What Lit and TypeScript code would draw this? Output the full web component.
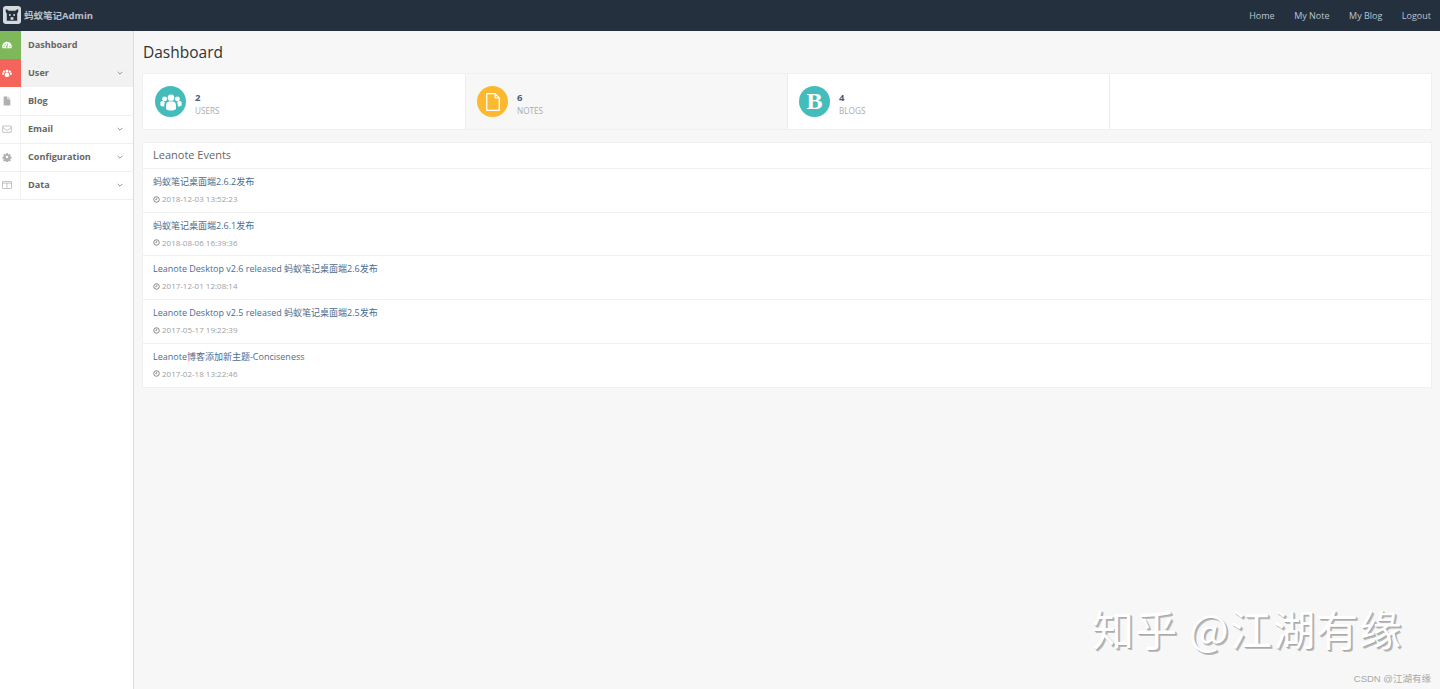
import { LitElement, html, css, svg } from "lit";
import { customElement } from "lit/decorators.js";

const usersIcon = svg`<g fill="currentColor"><circle cx="12" cy="7.400" r="3.600"/><circle cx="5" cy="8.600" r="2.700"/><circle cx="19" cy="8.600" r="2.700"/><path d="M6.600 20v-4.600c0-2.400 1.800-3.900 3.400-3.900h4c1.600 0 3.400 1.500 3.400 3.900V20c-1.600 1-3.400 1.300-5.400 1.300S8.200 21 6.600 20z"/><path d="M5.400 12.200c-.6.900-.8 2-.8 3.300v1.500C2.600 16.900 1 16.300.4 15.800v-2.600c0-1.200 1-2.200 2.200-2.200h1c.6.600 1.200 1 1.800 1.200zM18.600 12.200c.6.900.8 2 .8 3.300v1.500c2-.1 3.600-.7 4.200-1.200v-2.600c0-1.200-1-2.200-2.200-2.200h-1c-.6.600-1.200 1-1.800 1.200z"/></g>`;

const gauge = svg`<path fill="currentColor" fill-rule="evenodd" d="M12 4C5.400 4 .5 9.200.5 15.500c0 1.600.4 3 1 4.300h21c.6-1.300 1-2.700 1-4.300C23.500 9.200 18.600 4 12 4zM5 16.500a1.500 1.500 0 1 1 0-3 1.500 1.500 0 0 1 0 3zm2.500-5a1.500 1.500 0 1 1 0-3 1.500 1.500 0 0 1 0 3zm4.500 7a2.500 2.500 0 0 1-1-4.800L13.500 7.500l1 .4-1.500 6.800a2.500 2.500 0 0 1-1 3.800zm7-2a1.500 1.500 0 1 1 0-3 1.500 1.500 0 0 1 0 3z"/>`;
const fileIcon = svg`<path fill="currentColor" d="M4 1h9v7h7v15H4zM15 1.500 19.500 6H15z"/>`;
const envelope = svg`<path fill="none" stroke="currentColor" stroke-width="1.800" d="M2.500 5h19a1 1 0 0 1 1 1v13a1 1 0 0 1-1 1h-19a1 1 0 0 1-1-1V6a1 1 0 0 1 1-1zM2 8.500l8.300 6c1 .7 2.400.7 3.400 0l8.300-6"/>`;
const cog = svg`<path fill="currentColor" fill-rule="evenodd" d="M10 1.500h4l.6 3 2.200.9 2.600-1.700 2.800 2.800-1.700 2.600.9 2.200 3 .6v4l-3 .6-.9 2.200 1.700 2.600-2.800 2.800-2.600-1.700-2.200.9-.6 3h-4l-.6-3-2.200-.9-2.600 1.700-2.800-2.800 1.700-2.600-.9-2.200-3-.6v-4l3-.6.900-2.200-1.700-2.600 2.800-2.800 2.600 1.700 2.200-.9zM12 8.500a3.500 3.500 0 1 0 0 7 3.500 3.500 0 0 0 0-7z" transform="translate(1.200 1.200) scale(.9)"/>`;
const columns = svg`<path fill="none" stroke="currentColor" stroke-width="1.800" d="M2 3.500h20a.8.8 0 0 1 .8.8v15.400a.8.8 0 0 1-.8.8H2a.8.8 0 0 1-.8-.8V4.300a.8.8 0 0 1 .8-.8zM1.500 7.500h21M12 7v13"/>`;
const chevron = svg`<path fill="none" stroke="currentColor" stroke-width="2.600" d="M5 8.500l7 7 7-7"/>`;
const clock = svg`<g fill="none" stroke="currentColor"><circle cx="12" cy="12" r="9.500" stroke-width="3"/><path stroke-width="2.400" d="M12.500 6v6.500H7.500"/></g>`;
const fileOutline = svg`<path fill="none" stroke="currentColor" stroke-width="1.500" stroke-linejoin="round" d="M4.500 2h10l5 5v15h-15zM14.500 2v5h5"/>`;

const menu = [
  { label: "Dashboard", icon: gauge, cls: "active green", arrow: false },
  { label: "User", icon: usersIcon, cls: "active red", arrow: true },
  { label: "Blog", icon: fileIcon, cls: "", arrow: false },
  { label: "Email", icon: envelope, cls: "", arrow: true },
  { label: "Configuration", icon: cog, cls: "", arrow: true },
  { label: "Data", icon: columns, cls: "", arrow: true },
];

const events = [
  ["蚂蚁笔记桌面端2.6.2发布", "2018-12-03 13:52:23"],
  ["蚂蚁笔记桌面端2.6.1发布", "2018-08-06 16:39:36"],
  ["Leanote Desktop v2.6 released 蚂蚁笔记桌面端2.6发布", "2017-12-01 12:08:14"],
  ["Leanote Desktop v2.5 released 蚂蚁笔记桌面端2.5发布", "2017-05-17 19:22:39"],
  ["Leanote博客添加新主题-Conciseness", "2017-02-18 13:22:46"],
];

@customElement("app-root")
export class AppRoot extends LitElement {
  static styles = css`
    :host {
      display: block;
      position: relative;
      height: 689px;
      overflow: hidden;
      background: #f7f7f7;
      font-family: "Open Sans", "Noto Sans CJK SC", sans-serif;
      color: #555;
    }
    svg { display: block; }
    a { text-decoration: none; color: inherit; }
    .top {
      height: 31px;
      box-sizing: border-box;
      background: #25303f;
      display: flex;
      align-items: center;
      justify-content: space-between;
      padding: 0 9px 1px 3px;
    }
    .brand { display: flex; align-items: center; gap: 3px; color: #b9c1ca; font-size: 9.500px; font-weight: 700; }
    .logo { width: 18px; height: 18px; border-radius: 3px; background: #d5dade; color: #25303f; }
    .nav { display: flex; gap: 19.500px; font-size: 9px; color: #bcc4cc; }
    .body { display: flex; height: 658px; }
    .side { width: 133px; background: #fff; border-right: 1px solid #dcdcdc; flex: none; }
    .item {
      height: 28px;
      display: flex;
      align-items: center;
      box-shadow: 0 1px 0 #efefef;
      color: #666;
      font-size: 9.100px;
      font-weight: 700;
    }
    .item.active { background: #f2f2f2; box-shadow: none; }
    .ic {
      width: 21px;
      height: 100%;
      flex: none;
      display: flex;
      align-items: center;
      padding-left: 2px;
      color: #b0b0b0;
      border-right: 1px solid #f2f2f2;
      box-sizing: border-box;
    }
    .ic svg { width: 10px; height: 10px; }
    .green .ic { background: #7fb85a; color: #fff; border: 0; }
    .red .ic { background: #f4645a; color: #fff; border: 0; }
    .label { flex: 1; padding: 0 0 1px 7px; }
    .arrow { width: 8px; height: 8px; margin-right: 9px; color: #888; }
    .main { flex: 1; min-width: 0; padding: 10px 9px 0 9px; }
    h1 { margin: 0; font-size: 15.500px; font-weight: 400; color: #333; line-height: 22px; }
    .stats {
      margin-top: 11px;
      height: 55px;
      background: #fff;
      box-shadow: 0 0 0 1px #f0f0f0, 0 1px 0 #e2e2e2;
      display: grid;
      grid-template-columns: repeat(4, 1fr);
    }
    .stat { display: flex; align-items: center; gap: 9px; padding-left: 12px; box-shadow: inset 1px 0 0 #ececec; }
    .stat:first-child { box-shadow: none; }
    .stat.hover { background: #f7f7f7; }
    .disc {
      width: 31px;
      height: 31px;
      border-radius: 50%;
      background: #45bcbc;
      color: #fff;
      display: flex;
      align-items: center;
      justify-content: center;
      font: 700 24px "Liberation Serif", serif;
    }
    .disc.y { background: #fcb92f; }
    .disc svg { width: 22px; height: 22px; }
    .disc.y svg { width: 20px; height: 20px; }
    .txt { padding-top: 4px; }
    .num { font-size: 9.500px; font-weight: 700; color: #4a607a; line-height: 13px; }
    .cap { font-size: 8.200px; color: #aaa; line-height: 13px; }
    .panel {
      margin-top: 14px;
      background: #fff;
      box-shadow: 0 0 0 1px #f0f0f0, 0 1px 0 #e2e2e2;
    }
    .panel h2 {
      margin: 0;
      height: 26px;
      box-sizing: border-box;
      padding-left: 10px;
      font-size: 11px;
      font-weight: 400;
      line-height: 24px;
      color: #666;
      border-bottom: 1px solid #f2f2f2;
    }
    .row { height: 43.700px; box-sizing: border-box; padding: 6px 10px 0; border-bottom: 1px solid #f2f2f2; }
    .row:last-child { border-bottom: 0; }
    .row a { display: block; font-size: 9px; line-height: 13px; color: #4c6c8e; }
    .when { display: flex; align-items: center; gap: 2px; margin-top: 5px; font-size: 8px; line-height: 12px; color: #a0a0a0; }
    .when svg { width: 7px; height: 7px; color: #777; }
    .mark {
      position: absolute;
      left: 1092px;
      top: 600px;
      font: 400 42px/56px "Noto Sans CJK SC", sans-serif;
      letter-spacing: 1.200px;
      color: #fff;
      text-shadow: 1px 1px 0 #aaa, 2px 2px 0 #bcbcbc;
      white-space: nowrap;
    }
    .csdn {
      position: absolute;
      right: 9px;
      top: 672px;
      font: 400 9.500px/14px "Liberation Sans", "Noto Sans CJK SC", sans-serif;
      color: #a8a8a8;
    }
  `;

  render() {
    return html`
      <header class="top">
        <div class="brand">
          <svg class="logo" viewBox="0 0 19 19">
            <path fill="currentColor" d="M3 3.500c1.500 0 2 1 3 1.500h7c1-.5 1.500-1.500 3-1.500.5 2 0 3.500-1 4.500v7.500H4V8C3 7 2.500 5.500 3 3.500z"/>
            <path fill="#d5dade" d="M6.500 8.500h1.500v2H6.500zM11 8.500h1.500v2H11zM8 12h3v2.500H8z"/>
          </svg>
          <span>蚂蚁笔记Admin</span>
        </div>
        <nav class="nav">
          <a>Home</a><a>My Note</a><a>My Blog</a><a>Logout</a>
        </nav>
      </header>
      <div class="body">
        <aside class="side">
          ${menu.map(
            (m) => html`<div class="item ${m.cls}">
              <span class="ic"><svg viewBox="0 0 24 24">${m.icon}</svg></span>
              <span class="label">${m.label}</span>
              ${m.arrow ? html`<svg class="arrow" viewBox="0 0 24 24">${chevron}</svg>` : ""}
            </div>`
          )}
        </aside>
        <main class="main">
          <h1>Dashboard</h1>
          <section class="stats">
            <div class="stat">
              <span class="disc"><svg viewBox="0 0 24 24">${usersIcon}</svg></span>
              <div class="txt"><div class="num">2</div><div class="cap">USERS</div></div>
            </div>
            <div class="stat hover">
              <span class="disc y"><svg viewBox="0 0 24 24">${fileOutline}</svg></span>
              <div class="txt"><div class="num">6</div><div class="cap">NOTES</div></div>
            </div>
            <div class="stat">
              <span class="disc">B</span>
              <div class="txt"><div class="num">4</div><div class="cap">BLOGS</div></div>
            </div>
            <div class="stat"></div>
          </section>
          <section class="panel">
            <h2>Leanote Events</h2>
            ${events.map(
              ([t, d]) => html`<div class="row">
                <a>${t}</a>
                <div class="when"><svg viewBox="0 0 24 24">${clock}</svg><span>${d}</span></div>
              </div>`
            )}
          </section>
        </main>
      </div>
      <div class="mark">知乎 @江湖有缘</div>
      <div class="csdn">CSDN @江湖有缘</div>
    `;
  }
}
